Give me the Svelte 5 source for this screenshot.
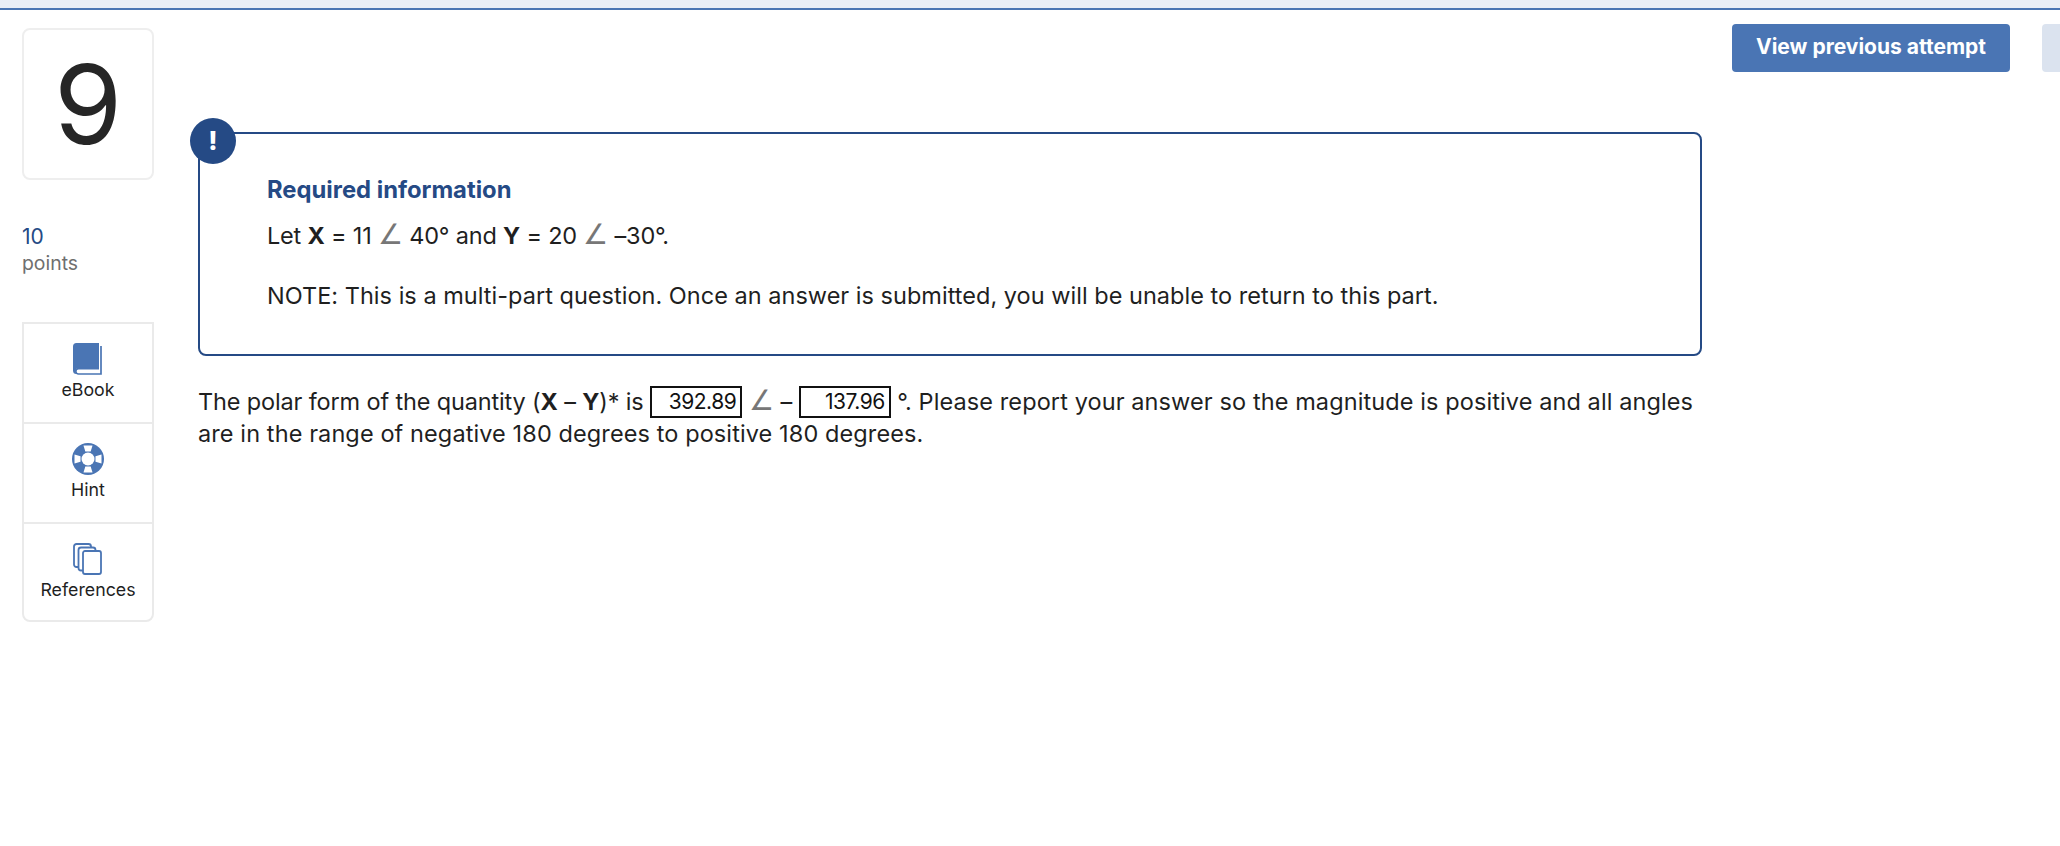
<script>
  const tools = ['eBook', 'Hint', 'References']
</script>

<div class="topbar"></div>

<div class="page">
  <aside class="side">
    <div class="number">9</div>
    <div class="points">
      <div class="points-value">10</div>
      <div class="points-label">points</div>
    </div>
    <ul class="tools">
      {#each tools as tool}
        <li class="tool">
          {#if tool === 'eBook'}
            <svg width="30" height="32" viewBox="0 0 30 32">
              <path fill="#4a75b4" d="M3.5 0H26v25H5.5A3 3 0 0 0 4 30.6L3.5 31A3.5 3.5 0 0 1 0 27.5V3.5A3.5 3.5 0 0 1 3.5 0z" />
              <path fill="none" stroke="#4a75b4" stroke-width="1.7" d="M28 3v28H5.5a2.7 2.7 0 0 1 0-5.4H26" />
            </svg>
          {:else if tool === 'Hint'}
            <svg width="32" height="32" viewBox="0 0 32 32">
              <circle cx="16" cy="16" r="16" fill="#4a75b4" />
              <circle cx="16" cy="16" r="6.5" fill="#fff" />
              {#each [0, 90, 180, 270] as turn}
                <path fill="#fff" transform="rotate({turn} 16 16)" d="M11.5 2.5h9l-1.8 6h-5.4z" />
              {/each}
            </svg>
          {:else}
            <svg width="30" height="32" viewBox="0 0 30 32">
              <g fill="#fff" stroke="#4a75b4" stroke-width="1.8">
                <rect x="1" y="1" width="17" height="23" rx="2.5" />
                <rect x="5.5" y="4.5" width="17" height="23" rx="2.5" />
                <rect x="10" y="8" width="18" height="23" rx="2" />
              </g>
            </svg>
          {/if}
          <span>{tool}</span>
        </li>
      {/each}
    </ul>
  </aside>

  <main class="question">
    <section class="info">
      <span class="badge">!</span>
      <h2>Required information</h2>
      <p class="given">
        Let <b>X</b> = 11 <span class="angle">∠</span> 40° and <b>Y</b> = 20 <span class="angle">∠</span> –30°.
      </p>
      <p class="note">NOTE: This is a multi-part question. Once an answer is submitted, you will be unable to return to this part.</p>
    </section>

    <p class="prompt">
      <span class="lead">The polar form of the quantity (<b>X</b> – <b>Y</b>)* is</span>
      <span class="answer">392.89</span>
      <span class="angle">∠</span> –
      <span class="answer">137.96</span>
      <span class="rest">°. Please report your answer so the magnitude is positive and all angles are in the range of negative 180 degrees to positive 180 degrees.</span>
    </p>
  </main>

  <div class="actions">
    <button class="attempt">View previous attempt</button>
    <div class="next"></div>
  </div>
</div>

<style>
  :global(body) {
    margin: 0;
    background: #fff;
    overflow: hidden;
  }

  .topbar {
    height: 8px;
    background: #e9eef7;
    border-bottom: 2px solid #4a75b4;
  }

  .page {
    display: flex;
    font-family: Inter, 'Liberation Sans', sans-serif;
    color: #1f1f1f;
  }

  .side {
    width: 132px;
    margin-left: 22px;
    padding-top: 18px;
    flex: none;
  }

  .number {
    box-sizing: border-box;
    height: 152px;
    border: 2px solid #eee;
    border-radius: 8px;
    font-size: 110px;
    line-height: 148px;
    text-align: center;
    color: #262626;
  }

  .points {
    margin-top: 43px;
  }

  .points-value {
    font-size: 21px;
    line-height: 27px;
    color: #254a85;
  }

  .points-label {
    font-size: 19.4px;
    line-height: 26px;
    color: #6f6f6f;
  }

  .tools {
    list-style: none;
    margin: 46px 0 0;
    padding: 0;
    border: 2px solid #eaeaea;
    border-radius: 0 0 8px 8px;
  }

  .tool {
    box-sizing: border-box;
    height: 100px;
    padding-top: 19px;
    border-bottom: 2px solid #eaeaea;
    display: flex;
    flex-direction: column;
    align-items: center;
    gap: 4px;
    font-size: 17.8px;
    line-height: 22px;
  }

  .tool:last-child {
    border-bottom: 0;
    height: 96px;
  }

  .tool svg {
    display: block;
  }

  .question {
    width: 1504px;
    margin-left: 44px;
    padding-top: 122px;
    flex: none;
    font-size: 23.5px;
    line-height: 32px;
  }

  .info {
    position: relative;
    box-sizing: border-box;
    height: 224px;
    padding: 40px 67px 0;
    border: 2px solid #254a85;
    border-radius: 8px;
  }

  .badge {
    position: absolute;
    left: -10px;
    top: -16px;
    width: 46px;
    height: 46px;
    border-radius: 50%;
    background: #254a85;
    color: #fff;
    font-size: 26px;
    font-weight: 800;
    line-height: 46px;
    text-align: center;
  }

  h2 {
    margin: 0;
    font-size: 23.8px;
    font-weight: 700;
    line-height: 32px;
    color: #254a85;
  }

  p {
    margin: 0;
  }

  .given {
    margin-top: 14px;
    letter-spacing: -0.2px;
  }

  .note {
    margin-top: 28px;
    letter-spacing: 0.02px;
  }

  .angle {
    color: #777;
    font-size: 1.2em;
    line-height: 0;
  }

  .prompt {
    margin-top: 30px;
  }

  .lead {
    letter-spacing: -0.15px;
  }

  .rest {
    letter-spacing: 0.1px;
  }

  .answer {
    display: inline-block;
    box-sizing: border-box;
    width: 92px;
    height: 32px;
    border: 2px solid #111;
    padding-right: 4px;
    font-size: 21px;
    letter-spacing: -0.5px;
    line-height: 28px;
    text-align: right;
    vertical-align: top;
    color: #111;
  }

  .actions {
    display: flex;
    margin-left: 30px;
    padding-top: 14px;
    gap: 32px;
    align-items: flex-start;
    flex: none;
  }

  .attempt {
    width: 278px;
    height: 48px;
    padding: 0 0 3px;
    border: 0;
    border-radius: 4px;
    background: #4a75b4;
    color: #fff;
    font: 700 21px Inter, 'Liberation Sans', sans-serif;
    flex: none;
  }

  .next {
    width: 60px;
    height: 48px;
    border-radius: 4px;
    background: #dbe3ef;
    flex: none;
  }
</style>
